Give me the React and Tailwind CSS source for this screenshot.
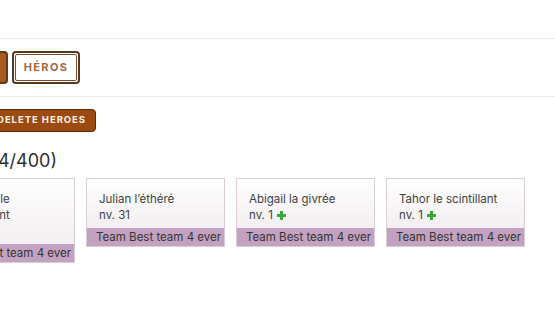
import React from 'react';

const heroes = [
  { name: 'Augustin le flamboyant', level: 12, plus: false },
  { name: "Julian l’éthéré", level: 31, plus: false },
  { name: 'Abigail la givrée', level: 1, plus: true },
  { name: 'Tahor le scintillant', level: 1, plus: true },
];

function Plus() {
  return (
    <svg width="9" height="9" viewBox="0 0 9 9" className="inline-block ml-1">
      <path d="M3 0h3v3h3v3H6v3H3V6H0V3h3z" fill="#3aa63a" />
    </svg>
  );
}

function HeroCard({ hero }) {
  return (
    <div className="w-[139px] shrink-0 border border-[#d9ccd7] flex flex-col">
      <div className="bg-gradient-to-b from-white to-[#f2eef1] pt-[12px] pb-[5px] pl-3 pr-3 text-[11.5px] leading-4 text-[#404040]">
        <div>{hero.name}</div>
        <div className="flex items-center">
          nv. {hero.level}
          {hero.plus && <Plus />}
        </div>
      </div>
      <div className="bg-[#c3a2bf] h-[18px] pl-[9px] text-[11.5px] leading-[18px] text-[#353535] whitespace-nowrap">
        Team Best team 4 ever
      </div>
    </div>
  );
}

export default function App() {
  return (
    <div className="w-[555px] h-[312px] bg-white overflow-hidden" style={{ fontFamily: 'Inter, "Noto Sans", sans-serif' }}>
      <div className="h-[39px] border-b border-[#ebebeb]" />
      <div className="border-b border-[#ebebeb] py-3">
        <div className="-ml-[64px] flex gap-1">
          <button className="w-[72px] h-[33px] rounded-[4px] border-2 border-[#5e3820] bg-[#a85a1c] text-[11px] font-bold tracking-[0.12em] text-[#fbe9d8]">
            ÉQUIPES
          </button>
          <button className="w-[68px] h-[33px] rounded-[4px] border-2 border-[#5a3820] bg-white p-px">
            <span className="flex h-full items-center justify-center rounded-[2px] border border-[#7a4b2b] text-[11px] font-bold tracking-[0.12em] text-[#a3673d]">
              HÉROS
            </span>
          </button>
        </div>
      </div>
      <div className="-ml-[64px] pt-3">
        <button className="h-[23px] w-[160px] rounded-[4px] border border-[#5f2a08] bg-[#9b4a12] text-[9.5px] font-bold tracking-[0.1em] text-[#fdf0e2] flex items-center justify-end pr-[9px]">
          MASS DELETE HEROES
        </button>
        <div className="mt-[15px] -ml-[11px] text-[18px] leading-7 text-[#2e2e2e]">Héros (24/400)</div>
        <div className="mt-[3px] flex items-start gap-[11px]">
          {heroes.map((h, i) => (
            <HeroCard key={i} hero={h} />
          ))}
        </div>
      </div>
    </div>
  );
}
